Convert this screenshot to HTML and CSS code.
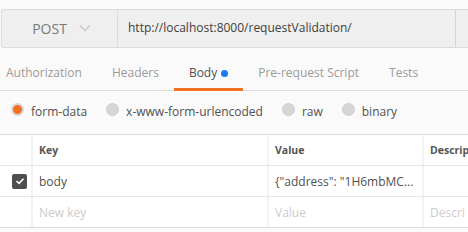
FILE: index.html
```html
<!DOCTYPE html>
<html>
<head>
<meta charset="utf-8">
<link rel="stylesheet" href="styles.css">
</head>
<body>
<div class="urlbar">
  <div class="method">POST
    <svg class="chev" width="12" height="8" viewBox="0 0 12 8"><path d="M1 1.5 L6 6.5 L11 1.5" fill="none" stroke="#c8c8c8" stroke-width="1.4"/></svg>
  </div>
  <div class="url">http://localhost:8000/requestValidation/</div>
  <div class="send"></div>
</div>
<div class="tabs">
  <div class="tab">Authorization</div>
  <div class="tab">Headers</div>
  <div class="tab active">Body <span class="dot"></span></div>
  <div class="tab">Pre-request Script</div>
  <div class="tab">Tests</div>
</div>
<div class="radios">
  <label class="radio"><span class="circle on"></span>form-data</label>
  <label class="radio"><span class="circle"></span>x-www-form-urlencoded</label>
  <label class="radio"><span class="circle"></span>raw</label>
  <label class="radio"><span class="circle"></span>binary</label>
</div>
<div class="table">
  <div class="row head">
    <div class="cell chk"></div>
    <div class="cell">Key</div>
    <div class="cell">Value</div>
    <div class="cell">Descrip</div>
  </div>
  <div class="row">
    <div class="cell chk"><span class="box"><svg width="10" height="8" viewBox="0 0 10 8"><path d="M1.5 4 L4 6.3 L8.5 1.7" fill="none" stroke="#fff" stroke-width="1.6"/></svg></span></div>
    <div class="cell">body</div>
    <div class="cell">{"address": "1H6mbMC...</div>
    <div class="cell"></div>
  </div>
  <div class="row ph">
    <div class="cell chk"></div>
    <div class="cell">New key</div>
    <div class="cell">Value</div>
    <div class="cell">Descri</div>
  </div>
</div>
</body>
</html>
```
FILE: styles.css
```css
html, body {
  margin: 0;
  padding: 0;
  background: #fafafa;
  font-family: "Open Sans", "Liberation Sans", sans-serif;
  overflow: hidden;
}
body {
  width: 468px;
  height: 232px;
}
.urlbar {
  display: flex;
  margin: 9px 0 0 1px;
  height: 37px;
  border: 1px solid #dcdcdc;
  border-right: none;
  border-radius: 3px 0 0 3px;
  background: #efefef;
}
.method {
  width: 115px;
  display: flex;
  align-items: center;
  justify-content: center;
  gap: 12px;
  font-size: 14px;
  color: #7a7a7a;
  padding-left: 4px;
  box-sizing: border-box;
}
.chev { margin-top: -2px; }
.url {
  width: 337px;
  border-left: 1px solid #dcdcdc;
  display: flex;
  align-items: center;
  padding-left: 10px;
  box-sizing: border-box;
  font-size: 12px;
  color: #404040;
  padding-bottom: 2px;
}
.send {
  flex: 1;
  border-left: 1px solid #d4d4d4;
  margin-left: 1px;
}
.tabs {
  display: flex;
  margin-top: 1px;
  margin-left: -9px;
  border-bottom: 1px solid #dedede;
  box-sizing: border-box;
  height: 42px;
}
.tab {
  padding: 0 15px;
  font-size: 12px;
  color: #9a9a9a;
  display: flex;
  align-items: center;
  padding-top: 8px;
  border-bottom: 3px solid transparent;
  margin-bottom: -1px;
  white-space: nowrap;
}
.tab.active {
  color: #505050;
  border-bottom-color: #f47023;
}
.dot {
  display: inline-block;
  width: 7px;
  height: 7px;
  border-radius: 50%;
  background: #1a7cf2;
  margin-left: 4px;
  margin-top: 2px;
}
.radios {
  display: flex;
  height: 43px;
  align-items: center;
  padding-left: 11px;
  gap: 19px;
  padding-bottom: 2px;
  box-sizing: border-box;
}
.radio {
  display: flex;
  align-items: center;
  font-size: 12px;
  color: #505050;
  gap: 7px;
}
.circle {
  width: 11px;
  height: 11px;
  border-radius: 50%;
  background: #d6d6d6;
  border: 1px solid #cfcfcf;
  margin-top: -4px;
}
.circle.on {
  background: #f47023;
  width: 9px;
  height: 9px;
  border: 2px solid #d8d8d8;
}
.table {
  background: #fff;
  border-top: 1px solid #dcdcdc;
  border-bottom: 1px solid #dcdcdc;
}
.row {
  display: grid;
  grid-template-columns: 31px 236px 155px 1fr;
  height: 30px;
  border-bottom: 1px solid #e6e6e6;
}
.row:last-child { border-bottom: none; }
.cell {
  display: flex;
  align-items: center;
  padding-left: 6px;
  font-size: 12px;
  color: #505050;
  border-left: 2px solid #f3f3f3;
  white-space: nowrap;
  overflow: hidden;
}
.cell.chk {
  border-left: none;
  padding-left: 12px;
}
.head .cell {
  font-size: 10.5px;
  font-weight: bold;
  color: #555;
}
.ph .cell { color: #cccccc; }
.box {
  width: 15px;
  height: 15px;
  border-radius: 2px;
  background: #4f4f4f;
  display: flex;
  align-items: center;
  justify-content: center;
}
```
